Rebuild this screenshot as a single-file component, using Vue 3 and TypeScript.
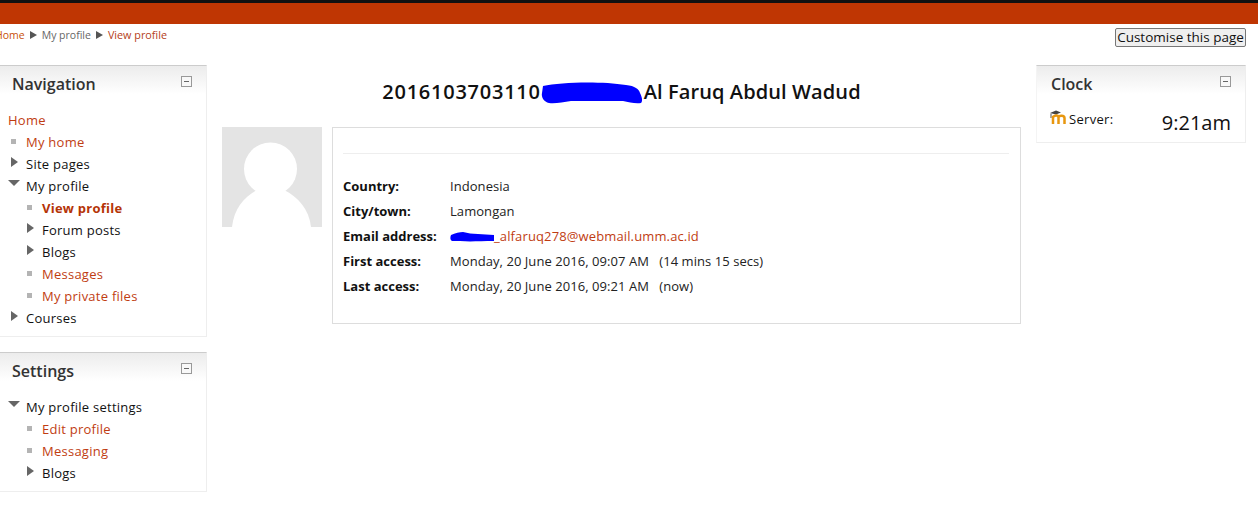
<script setup lang="ts">
interface TreeItem {
  label: string
  level: number
  icon: 'none' | 'leaf' | 'closed' | 'open'
  link?: boolean
  active?: boolean
}

const navItems: TreeItem[] = [
  { label: 'Home', level: 0, icon: 'none', link: true },
  { label: 'My home', level: 1, icon: 'leaf', link: true },
  { label: 'Site pages', level: 1, icon: 'closed' },
  { label: 'My profile', level: 1, icon: 'open' },
  { label: 'View profile', level: 2, icon: 'leaf', link: true, active: true },
  { label: 'Forum posts', level: 2, icon: 'closed' },
  { label: 'Blogs', level: 2, icon: 'closed' },
  { label: 'Messages', level: 2, icon: 'leaf', link: true },
  { label: 'My private files', level: 2, icon: 'leaf', link: true },
  { label: 'Courses', level: 1, icon: 'closed' },
]

const settingsItems: TreeItem[] = [
  { label: 'My profile settings', level: 1, icon: 'open' },
  { label: 'Edit profile', level: 2, icon: 'leaf', link: true },
  { label: 'Messaging', level: 2, icon: 'leaf', link: true },
  { label: 'Blogs', level: 2, icon: 'closed' },
]

const blocks = [
  { title: 'Navigation', items: navItems },
  { title: 'Settings', items: settingsItems },
]
</script>

<template>
  <div class="page">
    <div class="topbar"></div>
    <div class="crumbbar">
      <nav class="crumbs">
        <span class="c-home">Home</span>
        <span class="c-sep"></span>
        <span class="c-mid">My profile</span>
        <span class="c-sep"></span>
        <span class="c-cur">View profile</span>
      </nav>
      <button class="customise">Customise this page</button>
    </div>

    <div class="columns">
      <aside class="left">
        <section v-for="b in blocks" :key="b.title" class="block">
          <header class="block-head">
            <h3>{{ b.title }}</h3>
            <span class="collapse"></span>
          </header>
          <ul class="tree">
            <li v-for="it in b.items" :key="it.label" class="row" :class="'lvl' + it.level">
              <span class="ico" :class="it.icon"></span>
              <span :class="{ link: it.link, active: it.active }">{{ it.label }}</span>
            </li>
          </ul>
        </section>
      </aside>

      <main class="main">
        <h2 class="name">
          <span class="digits">2016103703110</span><svg class="scrib-name" width="103" height="24" viewBox="0 0 103 24">
            <path d="M2 5 C20 1 60 0 85 4 C94 5 98 8 99 12 C101 16 102 20 100 22 C94 23 88 21 82 20 L30 20 C22 21 14 23 8 22 C3 21 0 16 1 12 Z" fill="#0000ff" />
          </svg>Al Faruq Abdul Wadud
        </h2>
        <div class="profile">
          <svg class="avatar" width="100" height="100" viewBox="0 0 100 100">
            <rect width="100" height="100" fill="#e4e4e4" />
            <circle cx="48.5" cy="42" r="26.5" fill="#fff" />
            <path d="M10 100 C12 82 22 70 35 63 L62 63 C76 70 87 82 89 100 Z" fill="#fff" />
          </svg>
          <div class="info">
            <hr class="rule" />
            <dl class="fields">
              <dt>Country:</dt>
              <dd>Indonesia</dd>
              <dt>City/town:</dt>
              <dd>Lamongan</dd>
              <dt>Email address:</dt>
              <dd>
                <svg class="scrib-mail" width="44" height="11" viewBox="0 0 44 11">
                  <path d="M1 4 C5 2 10 1 13 1 C18 2 22 3 28 3 L44 4 L44 10 C30 10 20 11 10 10 L2 10 C0 9 0 6 1 4 Z" fill="#0000ff" />
                </svg><span class="link mail">_alfaruq278@webmail.umm.ac.id</span>
              </dd>
              <dt>First access:</dt>
              <dd>Monday, 20 June 2016, 09:07 AM&nbsp;&nbsp;&nbsp;(14 mins 15 secs)</dd>
              <dt>Last access:</dt>
              <dd>Monday, 20 June 2016, 09:21 AM&nbsp;&nbsp;&nbsp;(now)</dd>
            </dl>
          </div>
        </div>
      </main>

      <aside class="right">
        <section class="block">
          <header class="block-head">
            <h3>Clock</h3>
            <span class="collapse"></span>
          </header>
          <div class="clock">
            <svg class="moodle" width="17" height="14" viewBox="0 0 17 14">
              <path d="M0 3 L6 0.5 L11 2.5 L6 4.5 Z" fill="#444" />
              <path d="M1 3.5 L1 8" stroke="#555" stroke-width="1" fill="none" />
              <path d="M3 14 L3 6 M3 7 C5 5 8.5 5 8.5 7.5 L8.5 14 M8.5 7.5 C8.5 5 14.5 5 14.5 8 L14.5 14" stroke="#e8970f" stroke-width="2.5" fill="none" />
            </svg>
            <span class="server">Server:</span>
            <span class="time">9:21am</span>
          </div>
        </section>
      </aside>
    </div>
  </div>
</template>

<style scoped>
.page {
  width: 1258px;
  min-height: 527px;
  overflow: hidden;
  background: #fff;
  font-family: "Open Sans", "Liberation Sans", sans-serif;
  font-size: 13px;
  color: #111;
}

.topbar {
  height: 21px;
  background: #bf3603;
  border-top: 3px solid #111;
}

.crumbbar {
  display: flex;
  justify-content: space-between;
  align-items: flex-start;
  height: 37px;
  padding: 4px 12px 0 0;
}

.crumbs {
  display: flex;
  align-items: center;
  gap: 5px;
  margin-left: -5px;
  font-size: 10.5px;
  line-height: 14px;
}

.c-home {
  color: #c8500a;
}

.c-sep {
  width: 0;
  height: 0;
  border-left: 7px solid #555;
  border-top: 4px solid transparent;
  border-bottom: 4px solid transparent;
}

.c-mid {
  color: #666;
}

.c-cur {
  color: #b5401a;
  font-size: 10.8px;
}

.customise {
  width: 131px;
  height: 19px;
  padding: 0;
  border: 1px solid #777;
  border-radius: 2px;
  background: #efefef;
  font-family: inherit;
  font-size: 13.5px;
  line-height: 17px;
  color: #111;
}

.columns {
  display: flex;
  gap: 15px;
  padding-right: 12px;
}

.left {
  flex: 0 0 207px;
  display: flex;
  flex-direction: column;
  gap: 15px;
}

.main {
  flex: 1;
  min-width: 0;
}

.right {
  flex: 0 0 210px;
}

.block {
  background: #fff;
  border-top: 1px solid #ccc;
  border-right: 1px solid #eee;
  border-bottom: 1px solid #eee;
  border-left: 1px solid #f4f4f4;
}

.left .block {
  border-left: 0;
}

.block-head {
  display: flex;
  justify-content: space-between;
  align-items: flex-start;
  height: 43px;
  padding: 8px 14px 0 12px;
  box-sizing: border-box;
  background: linear-gradient(#ececec, #fff 28px);
}

.right .block-head {
  padding-left: 14px;
}

.block-head h3 {
  margin: 0;
  font-size: 16px;
  line-height: 20px;
  font-weight: 600;
  color: #333;
}

.collapse {
  position: relative;
  width: 11px;
  height: 11px;
  margin-top: 2px;
  box-sizing: border-box;
  border: 1px solid #999;
  background: #f8f8f8;
}

.collapse::after {
  content: "";
  position: absolute;
  left: 2px;
  right: 2px;
  top: 4px;
  height: 1px;
  background: #666;
}

.tree {
  list-style: none;
  margin: 0;
  padding: 0 0 7px;
  letter-spacing: 0.25px;
}

.row {
  display: flex;
  align-items: center;
  height: 22px;
  line-height: 22px;
  white-space: nowrap;
}

.lvl0,
.lvl1 {
  padding-left: 8px;
}

.lvl2 {
  padding-left: 24px;
}

.ico {
  flex: 0 0 18px;
  height: 12px;
  position: relative;
}

.lvl0 .ico {
  display: none;
}

.ico.leaf::before {
  content: "";
  position: absolute;
  left: 3px;
  top: 3px;
  width: 5px;
  height: 5px;
  background: #b4b4b4;
}

.ico.closed::before {
  content: "";
  position: absolute;
  left: 3px;
  top: -1px;
  border-left: 7px solid #666;
  border-top: 5px solid transparent;
  border-bottom: 5px solid transparent;
}

.ico.open::before {
  content: "";
  position: absolute;
  left: 0;
  top: 0;
  border-top: 6px solid #666;
  border-left: 6px solid transparent;
  border-right: 6px solid transparent;
}

.link {
  color: #bf3d12;
}

.active {
  font-weight: 700;
  color: #b53407;
}

.name {
  margin: 0;
  height: 62px;
  padding-top: 13px;
  box-sizing: border-box;
  text-align: center;
  font-size: 20px;
  line-height: 28px;
  font-weight: 600;
  letter-spacing: 0.1px;
  color: #111;
  white-space: nowrap;
}

.digits {
  letter-spacing: 0.75px;
}

.scrib-name {
  vertical-align: -6px;
}

.profile {
  display: flex;
  gap: 10px;
  align-items: flex-start;
}

.avatar {
  flex: 0 0 100px;
  display: block;
}

.info {
  flex: 1;
  height: 197px;
  box-sizing: border-box;
  border: 1px solid #ddd;
  padding: 25px 11px 0 10px;
}

.rule {
  height: 1px;
  margin: 0 0 20px;
  border: 0;
  background: #eee;
}

.fields {
  display: grid;
  grid-template-columns: 107px 1fr;
  grid-auto-rows: 25px;
  margin: 0;
  line-height: 25px;
}

.fields dt {
  font-weight: 700;
  color: #111;
}

.fields dd {
  margin: 0;
  color: #222;
  letter-spacing: 0.06px;
  white-space: nowrap;
}

.scrib-mail {
  vertical-align: -1px;
}

.mail {
  letter-spacing: 0.13px;
}

.clock {
  display: flex;
  align-items: flex-start;
  height: 33px;
  padding: 0 14px 0 13px;
}

.moodle {
  flex: 0 0 17px;
  margin-top: 1px;
}

.server {
  margin-left: 2px;
  margin-top: 1px;
  line-height: 18px;
  letter-spacing: 0.3px;
}

.time {
  margin-left: auto;
  line-height: 28px;
  font-size: 20px;
  color: #111;
}
</style>
